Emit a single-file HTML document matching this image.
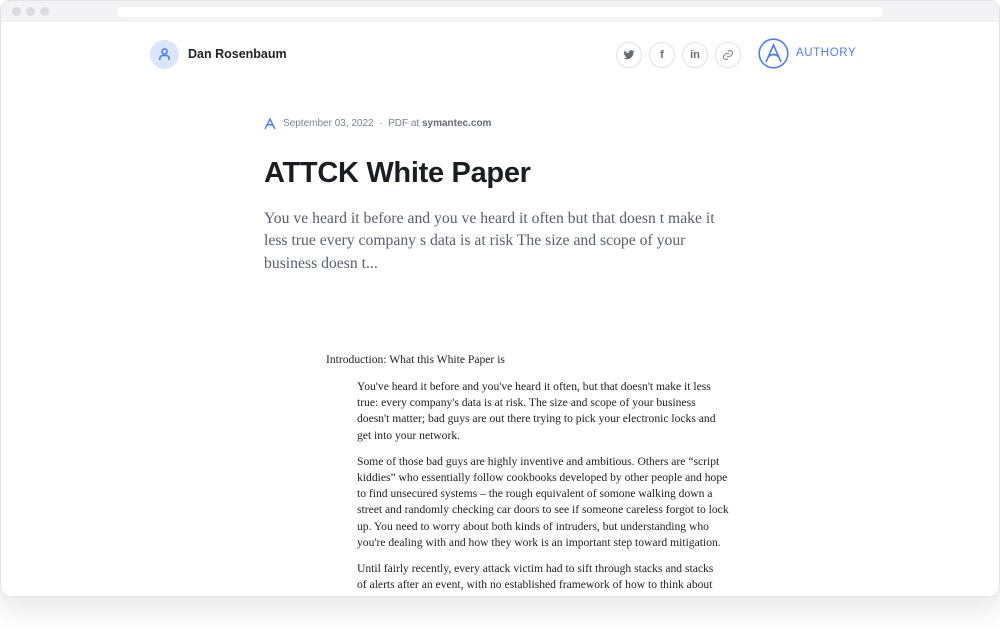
<!DOCTYPE html>
<html><head><meta charset="utf-8"><style>
*{margin:0;padding:0;box-sizing:border-box}
body{width:1000px;height:632px;background:#fff;position:relative;overflow:hidden;font-family:"Liberation Sans",sans-serif}
.win{position:absolute;left:0;top:0;width:1000px;height:597px;border:1px solid #e4e4e8;border-radius:10px;overflow:hidden;background:#fff;box-shadow:0 12px 28px rgba(0,0,0,.10)}
.bar{position:absolute;left:0;top:0;width:100%;height:21px;background:#f3f3f5}
.dot{position:absolute;top:6px;width:9px;height:9px;border-radius:50%;background:#dcdce0}
.url{position:absolute;left:116px;top:6px;width:766px;height:10px;border-radius:5px;background:#fff}
.abs{position:absolute}
.soc{position:absolute;top:41px;width:26px;height:26px;border:1px solid #e2e2e6;border-radius:50%;display:flex;align-items:center;justify-content:center;color:#666b78;font-size:11px;font-weight:bold}
.body p{font-family:"Liberation Serif",serif;font-size:11.6px;line-height:16.2px;color:#222;margin-bottom:10px;width:373px}
</style></head><body>
<div class="win">
<div class="bar"><div class="dot" style="left:11px"></div><div class="dot" style="left:25px"></div><div class="dot" style="left:39px"></div><div class="url"></div></div>
<div class="abs" style="left:149px;top:39px;width:29px;height:29px;border-radius:50%;background:#dbe6fd">
<svg width="29" height="29" viewBox="0 0 29 29"><circle cx="14.5" cy="11.5" r="2.6" fill="none" stroke="#4f7dfa" stroke-width="1.6"/><path d="M9.8 20 v-1.5 a3 3 0 0 1 3-3 h3.4 a3 3 0 0 1 3 3 V20" fill="none" stroke="#4f7dfa" stroke-width="1.6"/></svg></div>
<div class="abs" style="left:187px;top:46px;font-size:12.5px;font-weight:bold;color:#222">Dan Rosenbaum</div>
<div class="soc" style="left:615px"><svg width="12" height="12" viewBox="0 0 24 24"><path fill="#666b78" d="M23 4.6a9 9 0 0 1-2.6.7 4.5 4.5 0 0 0 2-2.5 9 9 0 0 1-2.9 1.1A4.5 4.5 0 0 0 11.8 8 12.8 12.8 0 0 1 2.5 3.3a4.5 4.5 0 0 0 1.4 6 4.5 4.5 0 0 1-2-.6 4.5 4.5 0 0 0 3.6 4.5 4.5 4.5 0 0 1-2 .1 4.5 4.5 0 0 0 4.2 3.1A9 9 0 0 1 1 18.3 12.8 12.8 0 0 0 7.9 20.3c8.3 0 12.8-6.9 12.8-12.8v-.6A9 9 0 0 0 23 4.6z"/></svg></div>
<div class="soc" style="left:648px">f</div>
<div class="soc" style="left:681px">in</div>
<div class="soc" style="left:714px"><svg width="12" height="12" viewBox="0 0 24 24" fill="none" stroke="#888" stroke-width="2.2"><path d="M10 14a5 5 0 0 0 7 0l3-3a5 5 0 0 0-7-7l-1 1"/><path d="M14 10a5 5 0 0 0-7 0l-3 3a5 5 0 0 0 7 7l1-1"/></svg></div>
<svg class="abs" style="left:757px;top:37px" width="31" height="31" viewBox="0 0 31 31"><circle cx="15.5" cy="15.5" r="14.3" fill="none" stroke="#4f7dfa" stroke-width="1.6"/><path d="M8 24 L15.5 7 L23 24 M10.5 18.5 q5-4 10 0" fill="none" stroke="#4f7dfa" stroke-width="1.6"/></svg>
<div class="abs" style="left:795px;top:46px;font-size:11.5px;color:#4f7dfa;letter-spacing:.6px">AUTHORY</div>
<svg class="abs" style="left:263px;top:117px" width="12" height="12" viewBox="0 0 12 12"><path d="M1 11 L6 1 L11 11 M3 7.5 q3-2 6 0" fill="none" stroke="#4f7dfa" stroke-width="1.4"/></svg>
<div class="abs" style="left:282px;top:117px;font-size:10px;color:#7d8290">September 03, 2022 &nbsp;·&nbsp; PDF at <b style="color:#666b78">symantec.com</b></div>
<div class="abs" style="left:263px;top:156px;font-size:29px;font-weight:bold;color:#1c1d22;letter-spacing:-.3px">ATTCK White Paper</div>
<div class="abs" style="left:263px;top:207px;width:465px;font-family:'Liberation Serif',serif;font-size:15.7px;line-height:22.3px;color:#5a6070">You ve heard it before and you ve heard it often but that doesn t make it less true every company s data is at risk The size and scope of your business doesn t...</div>
<div class="abs" style="left:325px;top:352px;font-family:'Liberation Serif',serif;font-size:11.6px;color:#222">Introduction: What this White Paper is</div>
<div class="abs body" style="left:356px;top:378px">
<p>You've heard it before and you've heard it often, but that doesn't make it less true: every company's data is at risk. The size and scope of your business doesn't matter; bad guys are out there trying to pick your electronic locks and get into your network.</p>
<p>Some of those bad guys are highly inventive and ambitious. Others are “script kiddies” who essentially follow cookbooks developed by other people and hope to find unsecured systems – the rough equivalent of somone walking down a street and randomly checking car doors to see if someone careless forgot to lock up. You need to worry about both kinds of intruders, but understanding who you're dealing with and how they work is an important step toward mitigation.</p>
<p style="width:362px">Until fairly recently, every attack victim had to sift through stacks and stacks of alerts after an event, with no established framework of how to think about these things and no shared vocabulary to describe what happened. Fortunately that has changed.</p>
</div>
</div>
</body></html>
